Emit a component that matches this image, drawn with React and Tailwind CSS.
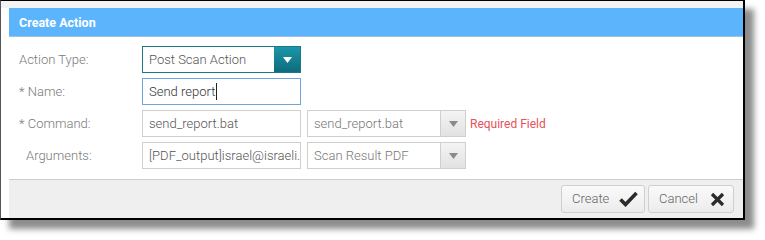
import React from 'react';

const font = { fontFamily: 'Roboto, "Noto Sans", Arial, sans-serif' };

const TriangleDown = ({ color }) => (
  <svg width="9" height="6" viewBox="0 0 9 6">
    <path d="M0 0 L9 0 L4.5 6 Z" fill={color} />
  </svg>
);

const TextBox = ({ value, focused, dark }) => (
  <div
    className={`w-[159px] h-[27px] flex items-center px-[6px] overflow-hidden text-[13px] font-light bg-white border ${
      focused ? 'border-[#6ea6dc]' : 'border-[#cfcfcf]'
    } ${dark ? 'text-[#333]' : 'text-[#555]'}`}
  >
    <span className="whitespace-nowrap">{value}</span>
    {focused && <span className="inline-block w-px h-[17px] bg-[#222] ml-px shrink-0" />}
  </div>
);

const GraySelect = ({ value }) => (
  <div className="w-[159px] h-[27px] flex border border-[#cfcfcf] bg-white">
    <div className="flex-1 flex items-center px-[6px] text-[13px] font-light text-[#777] whitespace-nowrap overflow-hidden">
      {value}
    </div>
    <div className="w-[25px] flex items-center justify-center border-l border-[#cfcfcf] bg-gradient-to-b from-[#f4f4f4] to-[#e2e2e2]">
      <TriangleDown color="#8a8a8a" />
    </div>
  </div>
);

const Row = ({ label, indent, children }) => (
  <div className="flex items-center h-[27px]">
    <div className={`w-[123px] text-[13px] font-light text-[#7a7a7a] ${indent ? 'pl-[7px]' : ''}`}>{label}</div>
    <div className="flex items-center gap-[6px]">{children}</div>
  </div>
);

export default function App() {
  return (
    <div className="w-[765px] h-[240px] bg-white" style={font}>
      <div className="w-[745px] h-[220px] flex flex-col border-t border-t-black border-r-2 border-r-black border-b-2 border-b-black border-l border-l-[#555] bg-white shadow-[9px_9px_6px_rgba(0,0,0,0.45)]">
        <div className="h-[7px] bg-[#f3f3f3]" />
        <div className="flex flex-1">
          <div className="w-[8px]" />
          <div className="flex-1 flex flex-col">
            <div className="h-[29px] bg-[#5cb5fc] border-b border-[#9fc3dc] flex items-center pl-[10px] pt-[2px] text-white text-[12.5px] font-bold">
              Create Action
            </div>
            <div className="flex flex-col gap-[5px] pt-[9px] pb-[10px] pl-[10px]">
              <Row label="Action Type:">
                <div className="w-[159px] h-[27px] flex border border-[#1c7a87] bg-white">
                  <div className="flex-1 flex items-center px-[6px] text-[13px] font-light text-[#555]">Post Scan Action</div>
                  <div className="w-[26px] flex items-center justify-center bg-gradient-to-b from-[#1b97aa] to-[#0d6c7c]">
                    <TriangleDown color="#ffffff" />
                  </div>
                </div>
              </Row>
              <Row label="* Name:">
                <TextBox value="Send report" focused dark />
              </Row>
              <Row label="* Command:">
                <TextBox value="send_report.bat" />
                <GraySelect value="send_report.bat" />
                <span className="text-[12px] text-[#e8505b] -ml-[2px]">Required Field</span>
              </Row>
              <Row label="Arguments:" indent>
                <TextBox value="[PDF_output]israel@israeli.c" />
                <GraySelect value="Scan Result PDF" />
              </Row>
            </div>
            <div className="flex-1 border-t border-[#cdcdcd] bg-[#efefef] flex items-center justify-end gap-[3px] pr-[9px]">
              <button className="w-[84px] h-[28px] flex items-center justify-between pl-[10px] pr-[6px] rounded-[3px] border border-[#cfcfcf] bg-gradient-to-b from-[#fafafa] to-[#ececec] text-[13px] font-light text-[#666]">
                <span>Create</span>
                <svg width="19" height="16" viewBox="0 0 19 16">
                  <path d="M1.5 8.5 L6.5 13.5 L17.5 2" stroke="#2b2b2b" strokeWidth="3.6" fill="none" strokeLinejoin="miter" />
                </svg>
              </button>
              <button className="w-[86px] h-[28px] flex items-center justify-between pl-[10px] pr-[8px] rounded-[3px] border border-[#cfcfcf] bg-gradient-to-b from-[#fafafa] to-[#ececec] text-[13px] font-light text-[#666]">
                <span>Cancel</span>
                <svg width="15" height="15" viewBox="0 0 15 15">
                  <path d="M2 2 L13 13 M13 2 L2 13" stroke="#2b2b2b" strokeWidth="3.2" fill="none" />
                </svg>
              </button>
            </div>
          </div>
        </div>
      </div>
    </div>
  );
}
